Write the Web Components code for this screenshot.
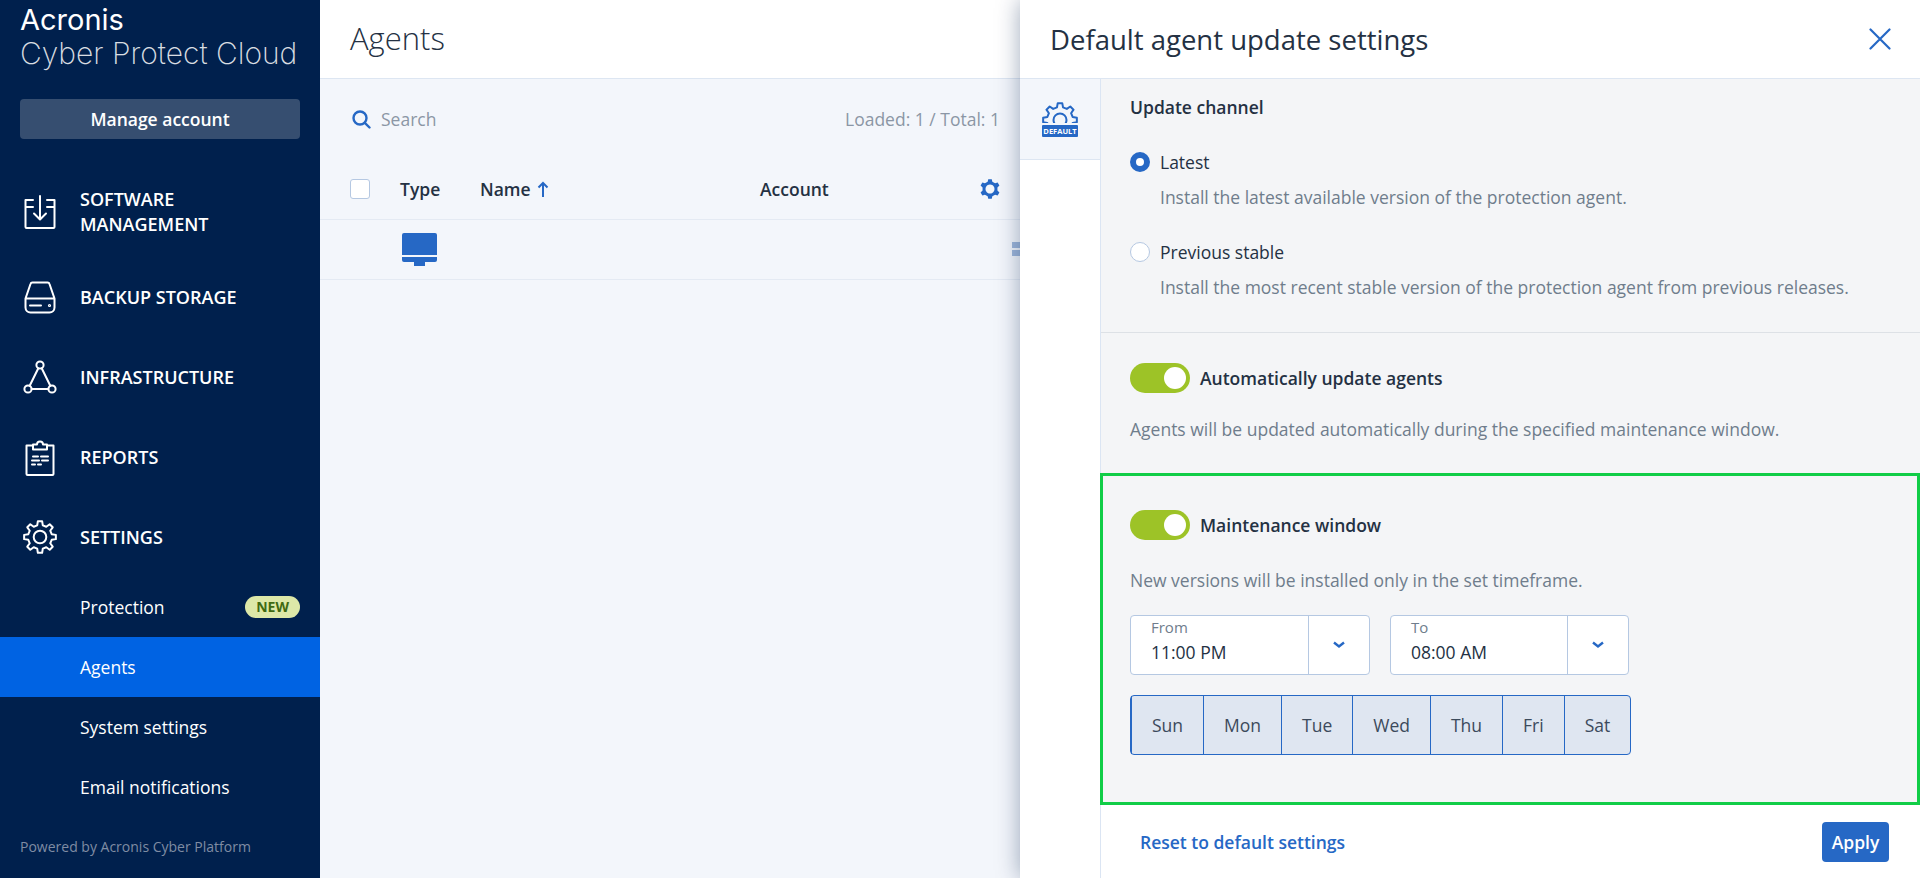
<!DOCTYPE html>
<html lang="en">
<head>
<meta charset="utf-8">
<title>Agents</title>
<style>
  html, body { margin: 0; height: 100%; overflow: hidden; }
  body { font-family: "Open Sans", "Liberation Sans", sans-serif; color: #243143; }
</style>
</head>
<body>
<app-shell>
  <side-bar slot="side"></side-bar>
  <agents-view slot="main"></agents-view>
  <update-panel slot="panel"></update-panel>
</app-shell>

<script>
// builds a toothed outline, used by the three gear icons
function gearPath(cx, cy, outer, inner, teeth) {
  const step = Math.PI * 2 / teeth;
  let d = '';
  for (let i = 0; i < teeth; i++) {
    const a = i * step - Math.PI / 2;
    const pts = [
      [inner, a - step * 0.3],
      [outer, a - step * 0.17],
      [outer, a + step * 0.17],
      [inner, a + step * 0.3],
    ];
    pts.forEach(([r, t], n) => {
      const x = (cx + Math.cos(t) * r).toFixed(2);
      const y = (cy + Math.sin(t) * r).toFixed(2);
      d += (i === 0 && n === 0 ? 'M' : 'L') + x + ' ' + y + ' ';
    });
  }
  return d + 'Z';
}

const NAV_ICONS = {
  software: `<path d="M9 4H1.500v7.500M1.500 11H9M23 4h7.500v7.500M30.500 11H23M1.500 11v20a1 1 0 0 0 1 1h27a1 1 0 0 0 1-1V11M16 0v23M10 17.500l6 6 6-6"/>`,
  storage: `<path d="M8.500 1.500h15a2 2 0 0 1 2 1.500l5 14.500H1.500l5-14.500a2 2 0 0 1 2-1.500zM1.500 17.500v9a5 5 0 0 0 5 5h19a5 5 0 0 0 5-5v-9M6 24.500h11"/><circle cx="25.500" cy="24.500" r=".6"/>`,
  infra: `<circle cx="16" cy="4" r="3.600"/><circle cx="4" cy="28" r="3.600"/><circle cx="28" cy="28" r="3.600"/><path d="M14.300 7.300L5.700 24.700M17.700 7.300l8.600 17.400M7.600 28h16.800"/>`,
  reports: `<path d="M9 6.500H2.500v28.500a1 1 0 0 0 1 1h25a1 1 0 0 0 1-1V6.500H23M9 10.500V5.500h4a3 3 0 0 1 6 0h4v5zM9 17.500h5M17 17.500h7M8 21.500h7M18 21.500h6M8 25.500h3M14 25.500h3"/>`,
  settings: `<path d="${gearPath(17, 17, 16, 12, 8)}"/><circle cx="17" cy="17" r="6.300"/>`,
};

class AppShell extends HTMLElement {
  constructor() {
    super();
    this.attachShadow({mode: 'open'}).innerHTML = `
      <style>
        :host { display: flex; height: 878px; position: relative; overflow: hidden; }
        .main { flex: 1; min-width: 0; }
        .over { position: absolute; top: 0; right: 0; bottom: 0; width: 900px; }
      </style>
      <slot name="side"></slot>
      <div class="main"><slot name="main"></slot></div>
      <div class="over"><slot name="panel"></slot></div>
    `;
  }
}

class NavGroup extends HTMLElement {
  constructor() {
    super();
    const icon = this.getAttribute('icon');
    const w = this.getAttribute('w') || 32;
    const h = this.getAttribute('h') || 32;
    this.attachShadow({mode: 'open'}).innerHTML = `
      <style>
        :host { display: flex; align-items: center; height: 80px; color: #fff; }
        .ic { width: 80px; display: flex; justify-content: center; flex: none; }
        svg { fill: none; stroke: #fff; stroke-width: 2; stroke-linecap: round; stroke-linejoin: round; overflow: visible; }
        .txt { font-size: 18px; font-weight: 600; line-height: 25px; text-transform: uppercase; }
      </style>
      <div class="ic"><svg width="${w}" height="${h}" viewBox="0 0 ${w} ${h}">${NAV_ICONS[icon]}</svg></div>
      <div class="txt"><slot></slot></div>
    `;
  }
}

class NavSub extends HTMLElement {
  constructor() {
    super();
    this.attachShadow({mode: 'open'}).innerHTML = `
      <style>
        :host { display: flex; align-items: center; justify-content: space-between; height: 60px; padding: 0 20px 0 80px; color: #fff; font-size: 17.500px; }
        :host([active]) { background: #0063e3; }
        .badge { background: #dde8a8; color: #3f6a12; font-size: 14px; font-weight: 700; line-height: 22px; padding: 0 11px; border-radius: 11px; }
        .badge:empty { display: none; }
      </style>
      <span><slot></slot></span>
      <span class="badge">${this.getAttribute('badge') || ''}</span>
    `;
  }
}

class SideBar extends HTMLElement {
  constructor() {
    super();
    this.attachShadow({mode: 'open'}).innerHTML = `
      <style>
        :host { display: flex; flex-direction: column; width: 320px; height: 878px; background: #00204d; flex: none; }
        .logo { color: #fff; padding: 3px 0 0 20px; height: 94px; box-sizing: border-box; font-family: Inter, "Open Sans", sans-serif; }
        .logo b { display: block; font-size: 29px; font-weight: 400; line-height: 34px; }
        .logo span { display: block; font-size: 30px; font-weight: 200; line-height: 32px; white-space: nowrap; opacity: .85; }
        .manage { margin: 5px 20px 28px; height: 40px; line-height: 40px; background: #364e70; border-radius: 4px; color: #fff; text-align: center; font-size: 17.500px; font-weight: 600; }
        .foot { margin-top: auto; height: 61px; padding-left: 20px; color: #7f8ca3; font-size: 14px; line-height: 60px; }
      </style>
      <div class="logo"><b>Acronis</b><span>Cyber Protect Cloud</span></div>
      <div class="manage">Manage account</div>
      <nav-group icon="software" style="height:90px">Software<br>Management</nav-group>
      <nav-group icon="storage">Backup storage</nav-group>
      <nav-group icon="infra">Infrastructure</nav-group>
      <nav-group icon="reports" h="37">Reports</nav-group>
      <nav-group icon="settings" w="34" h="34">Settings</nav-group>
      <nav-sub badge="NEW">Protection</nav-sub>
      <nav-sub active>Agents</nav-sub>
      <nav-sub>System settings</nav-sub>
      <nav-sub>Email notifications</nav-sub>
      <div class="foot">Powered by Acronis Cyber Platform</div>
    `;
  }
}

class AgentsView extends HTMLElement {
  constructor() {
    super();
    this.attachShadow({mode: 'open'}).innerHTML = `
      <style>
        :host { display: flex; flex-direction: column; height: 878px; background: #f3f6fb; }
        header { height: 78px; background: #fff; border-bottom: 1px solid #dde6f2; padding-left: 30px; font-size: 31px; font-weight: 300; line-height: 76px; color: #243143; }
        .tools { display: flex; align-items: center; height: 80px; padding: 0 920px 0 32px; color: #8b96a5; font-size: 17.500px; }
        .tools svg { margin-right: 10px; }
        .tools .count { margin-left: auto; }
        .head, .row { display: flex; align-items: center; border-bottom: 1px solid #e4eaf3; }
        .head { height: 60px; font-weight: 600; color: #243143; font-size: 17.500px; }
        .row { height: 59px; position: relative; }
        .check { width: 18px; height: 18px; margin-left: 30px; background: #fff; border: 1px solid #b5c8e2; border-radius: 3px; }
        .type { margin-left: 30px; width: 80px; }
        .name { width: 280px; display: flex; align-items: center; gap: 6px; }
        .account { width: 220px; }
        .row svg.mon { margin-left: 82px; }
        .row svg.tile { position: absolute; left: 692px; top: 22px; }
      </style>
      <header>Agents</header>
      <div class="tools">
        <svg width="19" height="19" viewBox="0 0 19 19" fill="none" stroke="#2668c5" stroke-width="2.400" stroke-linecap="round"><circle cx="8" cy="8" r="6.500"/><path d="M12.800 12.800L17.500 17.500"/></svg>
        <span>Search</span>
        <span class="count">Loaded: 1 / Total: 1</span>
      </div>
      <div class="head">
        <div class="check"></div>
        <div class="type">Type</div>
        <div class="name"><span>Name</span>
          <svg width="12" height="16" viewBox="0 0 12 16" fill="none" stroke="#2668c5" stroke-width="2"><path d="M6 16V2M1.500 6.500L6 2l4.500 4.500"/></svg>
        </div>
        <div class="account">Account</div>
        <svg width="20" height="20" viewBox="0 0 20 20" fill="#2668c5" fill-rule="evenodd"><path id="g"/></svg>
      </div>
      <div class="row">
        <svg class="mon" width="35" height="33" viewBox="0 0 35 33" fill="#2668c5"><path d="M2 0h31a2 2 0 0 1 2 2v20H0V2a2 2 0 0 1 2-2zM0 24h35v3a2 2 0 0 1-2 2H2a2 2 0 0 1-2-2zM12 29h11v4H12z"/></svg>
        <svg class="tile" width="8" height="14" viewBox="0 0 8 14" fill="#9fb7da"><path d="M0 0h8v6H0zM0 8h8v6H0z"/></svg>
      </div>
    `;
    this.shadowRoot.getElementById('g').setAttribute('d',
      gearPath(10, 10, 10, 7.6, 6) + ' M10 5.500a4.500 4.500 0 1 0 .01 0Z');
  }
}

class ToggleSwitch extends HTMLElement {
  constructor() {
    super();
    this.attachShadow({mode: 'open'}).innerHTML = `
      <style>
        :host { display: flex; align-items: center; gap: 10px; font-weight: 600; font-size: 17.500px; color: #243143; }
        .track { width: 60px; height: 30px; background: #9dc327; border-radius: 15px; display: flex; justify-content: flex-end; align-items: center; padding-right: 4px; box-sizing: border-box; }
        .knob { width: 22px; height: 22px; background: #fff; border-radius: 50%; }
      </style>
      <div class="track"><div class="knob"></div></div>
      <span><slot></slot></span>
    `;
  }
}

class RadioOption extends HTMLElement {
  constructor() {
    super();
    this.attachShadow({mode: 'open'}).innerHTML = `
      <style>
        :host { display: block; font-size: 17.500px; color: #243143; }
        .top { display: flex; align-items: center; gap: 10px; height: 24px; }
        .dot { width: 20px; height: 20px; box-sizing: border-box; border-radius: 50%; background: #fff; border: 1px solid #b5c8e2; }
        :host([checked]) .dot { border: 6px solid #2668c5; }
        .desc { margin: 11px 0 0 30px; line-height: 24px; color: #6f7d8c; }
      </style>
      <div class="top"><div class="dot"></div><span>${this.getAttribute('label')}</span></div>
      <div class="desc"><slot></slot></div>
    `;
  }
}

class TimeSelect extends HTMLElement {
  constructor() {
    super();
    this.attachShadow({mode: 'open'}).innerHTML = `
      <style>
        :host { display: flex; height: 60px; box-sizing: border-box; background: #fff; border: 1px solid #b5c8e2; border-radius: 4px; }
        .val { flex: 1; padding-left: 20px; }
        .lab { font-size: 15px; line-height: 18px; margin-top: 2px; color: #6f7d8c; }
        .txt { font-size: 17.500px; line-height: 24px; margin-top: 4px; color: #243143; }
        .btn { width: 60px; border-left: 1px solid #b5c8e2; display: flex; align-items: center; justify-content: center; }
      </style>
      <div class="val"><div class="lab">${this.getAttribute('label')}</div><div class="txt"><slot></slot></div></div>
      <div class="btn"><svg width="12" height="8" viewBox="0 0 12 8" fill="none" stroke="#2668c5" stroke-width="2.400"><path d="M1 1.500l5 4 5-4"/></svg></div>
    `;
  }
}

class DayPicker extends HTMLElement {
  constructor() {
    super();
    const days = ['Sun', 'Mon', 'Tue', 'Wed', 'Thu', 'Fri', 'Sat'];
    this.attachShadow({mode: 'open'}).innerHTML = `
      <style>
        :host { display: inline-flex; height: 60px; box-sizing: border-box; background: #dfe6f1; border: 1px solid #2668c5; border-radius: 4px; }
        div { padding: 0 20px; line-height: 58px; font-size: 17.500px; color: #3c4a5c; border-left: 1px solid #2668c5; }
        div:first-child { border-left: 0; padding-right: 19px; }
      </style>
      ${days.map(d => `<div>${d}</div>`).join('')}
    `;
  }
}

class UpdatePanel extends HTMLElement {
  constructor() {
    super();
    this.attachShadow({mode: 'open'}).innerHTML = `
      <style>
        :host { display: flex; flex-direction: column; height: 878px; background: #fff; box-shadow: 0 0 22px rgba(0, 32, 77, .38); font-size: 17.500px; }
        header { flex: none; height: 78px; border-bottom: 1px solid #dde6f2; display: flex; align-items: center; justify-content: space-between; padding: 0 29px 0 30px; font-size: 27.500px; color: #243143; }
        .body { flex: 1; display: flex; min-height: 0; }
        .tabs { width: 80px; flex: none; }
        .tab { height: 81px; box-sizing: border-box; background: #f3f6fb; border-bottom: 1px solid #dde6f2; display: flex; flex-direction: column; align-items: center; padding-top: 22px; }
        .tab span { display: block; width: 36px; height: 12px; margin-top: 2px; background: #2668c5; border-radius: 1px; color: #fff; font-size: 7.500px; font-weight: 700; line-height: 12px; text-align: center; }
        .content { flex: 1; display: flex; flex-direction: column; border-left: 1px solid #dbe5f3; min-width: 0; }
        .scroll { flex: 1; background: #f4f5f7; }
        .channel { height: 254px; box-sizing: border-box; padding: 16px 0 0 29px; border-bottom: 1px solid #dde1e6; }
        .channel h3 { margin: 0 0 31px; font-size: 17.500px; font-weight: 600; line-height: 24px; color: #243143; }
        .channel radio-option + radio-option { margin-top: 31px; }
        .auto { height: 140px; box-sizing: border-box; padding: 30px 0 0 29px; }
        p { margin: 0; line-height: 24px; color: #6f7d8c; }
        .auto p { margin-top: 24px; }
        .window { height: 332px; box-sizing: border-box; border: 3px solid #11cd47; padding: 34px 0 0 27px; margin-left: -1px; }
        .window p { margin-top: 28px; }
        .times { display: flex; gap: 20px; margin: 23px 0 20px; }
        .times time-select:first-child { width: 240px; }
        .times time-select:last-child { width: 239px; }
        footer { flex: none; height: 73px; display: flex; align-items: center; justify-content: space-between; padding: 0 31px 0 39px; box-sizing: border-box; }
        footer a { color: #2668c5; font-weight: 600; }
        footer button { font: 600 17.500px "Open Sans", sans-serif; color: #fff; background: #2668c5; border: 0; border-radius: 4px; height: 40px; width: 67px; padding: 0; }
      </style>
      <header>
        <span>Default agent update settings</span>
        <svg width="22" height="22" viewBox="0 0 22 22" fill="none" stroke="#2668c5" stroke-width="2.200" stroke-linecap="round"><path d="M1.500 1.500l19 19M20.500 1.500l-19 19"/></svg>
      </header>
      <div class="body">
        <div class="tabs">
          <div class="tab">
            <svg width="36" height="22" viewBox="0 0 36 22" fill="none" stroke="#2668c5" stroke-width="2" stroke-linejoin="round">
              <clipPath id="cut"><rect x="-2" y="-2" width="40" height="24"/></clipPath>
              <g clip-path="url(#cut)"><path id="tabGear"/><circle cx="18" cy="19" r="6.500"/></g>
            </svg>
            <span>DEFAULT</span>
          </div>
        </div>
        <div class="content">
          <div class="scroll">
            <div class="channel">
              <h3>Update channel</h3>
              <radio-option checked label="Latest">Install the latest available version of the protection agent.</radio-option>
              <radio-option label="Previous stable">Install the most recent stable version of the protection agent from previous releases.</radio-option>
            </div>
            <div class="auto">
              <toggle-switch>Automatically update agents</toggle-switch>
              <p>Agents will be updated automatically during the specified maintenance window.</p>
            </div>
            <div class="window">
              <toggle-switch>Maintenance window</toggle-switch>
              <p>New versions will be installed only in the set timeframe.</p>
              <div class="times">
                <time-select label="From">11:00 PM</time-select>
                <time-select label="To">08:00 AM</time-select>
              </div>
              <day-picker></day-picker>
            </div>
          </div>
          <footer>
            <a>Reset to default settings</a>
            <button>Apply</button>
          </footer>
        </div>
      </div>
    `;
    this.shadowRoot.getElementById('tabGear').setAttribute('d', gearPath(18, 19, 17, 13, 8));
  }
}

customElements.define('nav-group', NavGroup);
customElements.define('nav-sub', NavSub);
customElements.define('side-bar', SideBar);
customElements.define('agents-view', AgentsView);
customElements.define('toggle-switch', ToggleSwitch);
customElements.define('radio-option', RadioOption);
customElements.define('time-select', TimeSelect);
customElements.define('day-picker', DayPicker);
customElements.define('update-panel', UpdatePanel);
customElements.define('app-shell', AppShell);
</script>
</body>
</html>
